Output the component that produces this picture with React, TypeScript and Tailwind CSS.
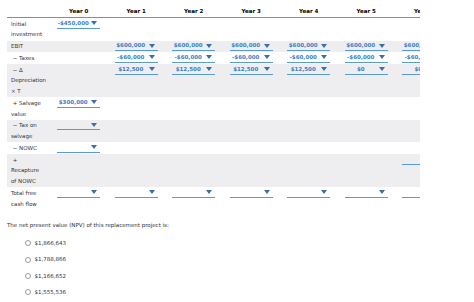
import React from "react";

const GRID = "grid grid-cols-[43px_repeat(7,57.5px)]";

function Dd({ v }: { v?: string }) {
  return (
    <div className="mx-auto flex h-[10px] w-[43px] items-center border-b border-[#5b9bd5]">
      <span className="flex-1 whitespace-nowrap text-center font-bold leading-[9px] text-[#3b7fc4]">
        {v ?? ""}
      </span>
      <svg width="6" height="4" viewBox="0 0 6 4" className="ml-[2px] mr-[3px] shrink-0">
        <path d="M0 0H6L3 4Z" fill="#3a6fa8" />
      </svg>
    </div>
  );
}

type Row = { label: React.ReactNode; gray: boolean; cells: (string | null | undefined)[] };

const rows: Row[] = [
  { label: <>Initial<br />investment</>, gray: false, cells: ["-$450,000"] },
  { label: <>EBIT</>, gray: true, cells: [undefined, "$600,000", "$600,000", "$600,000", "$600,000", "$600,000", "$600,000"] },
  { label: <>{"\u00a0"}− Taxes</>, gray: false, cells: [undefined, "-$60,000", "-$60,000", "-$60,000", "-$60,000", "-$60,000", "-$60,000"] },
  { label: <>{"\u00a0"}− Δ<br />Depreciation<br />× T</>, gray: true, cells: [undefined, "$12,500", "$12,500", "$12,500", "$12,500", "$0", "$0"] },
  { label: <>{"\u00a0"}+ Salvage<br />value</>, gray: false, cells: ["$300,000"] },
  { label: <>{"\u00a0"}− Tax on<br />salvage</>, gray: true, cells: [""] },
  { label: <>{"\u00a0"}− NOWC</>, gray: false, cells: [""] },
  { label: <>{"\u00a0"}+<br />Recapture<br />of NOWC</>, gray: true, cells: [undefined, undefined, undefined, undefined, undefined, undefined, ""] },
  { label: <>Total free<br />cash flow</>, gray: false, cells: ["", "", "", "", "", "", ""] },
];

const options = ["$1,866,643", "$1,788,866", "$1,166,652", "$1,555,536"];

export default function App() {
  return (
    <div className="h-[302px] w-[474px] overflow-hidden bg-white pl-[7px] font-['DejaVu_Sans',Verdana,sans-serif] text-[5.5px] text-[#333]">
      <div className="w-[413px] overflow-hidden">
        <div className="w-[445.5px]">
          <div className={`${GRID} h-[18px] border-b border-[#8c8c8c] pt-[6px] leading-[11px]`}>
            <div />
            {[0, 1, 2, 3, 4, 5, 6].map((i) => (
              <div key={i} className="whitespace-nowrap text-center font-bold text-black">
                Year {i}
              </div>
            ))}
          </div>
          {rows.map((r, ri) => (
            <div
              key={ri}
              className={`${GRID} py-[0.5px] leading-[10.75px] ${r.gray ? "bg-[#eeeef0]" : "bg-white"}`}
            >
              <div className="whitespace-nowrap pl-[4px]">{r.label}</div>
              {[0, 1, 2, 3, 4, 5, 6].map((ci) => {
                const c = r.cells[ci];
                return (
                  <div key={ci} className="self-start">
                    {c !== undefined && c !== null ? <Dd v={c} /> : null}
                  </div>
                );
              })}
            </div>
          ))}
        </div>
      </div>
      <div className="mt-[10px] leading-[11px]">
        The net present value (NPV) of this replacement project is:
      </div>
      <div className="mt-[7px] flex flex-col gap-[5.4px] pl-[17.5px]">
        {options.map((o) => (
          <div key={o} className="flex h-[11px] items-center leading-[11px]">
            <span className="h-[6px] w-[6px] rounded-full border border-[#9a9a9a] bg-white" />
            <span className="ml-[4px]">{o}</span>
          </div>
        ))}
      </div>
    </div>
  );
}
